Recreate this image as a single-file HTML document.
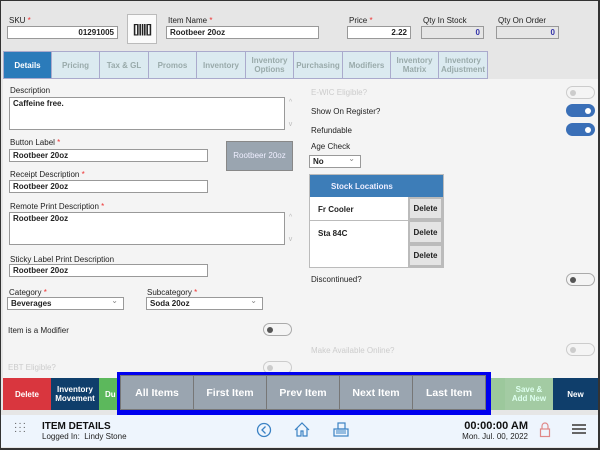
<!DOCTYPE html>
<html><head><style>
*{box-sizing:border-box;margin:0;padding:0}
body{width:600px;height:450px;overflow:hidden;background:#333;font-family:"Liberation Sans",sans-serif;font-size:8px;color:#222;position:relative}
.a{position:absolute}
.lbl{position:absolute;font-size:8px;color:#222}
.r{color:#e33}
.in{position:absolute;background:#fff;border:1px solid #999;font-size:8px;font-weight:bold;padding:1px 3px;height:13px;line-height:10px}
.tab{position:absolute;top:51px;height:28px;background:#dbeaf0;border:1px solid #aac;color:#9aa;font-weight:bold;font-size:8px;text-align:center;display:flex;align-items:center;justify-content:center;line-height:9px}
.tg{position:absolute;width:29px;height:13px;border-radius:7px;border:1px solid #aaa;background:#f4f4f4}
.tg::after{content:"";position:absolute;left:3px;top:3px;width:6px;height:6px;border-radius:50%;background:#555}
.tg.d{border-color:#ccc}.tg.d::after{background:#ccc}
.tg.on{background:#3a6fb7;border-color:#3a6fb7}.tg.on::after{left:auto;right:3px;background:#fff}
.btn{position:absolute;top:378px;height:32px;color:#fff;font-weight:bold;font-size:8px;display:flex;align-items:center;justify-content:center;text-align:center;line-height:9px}
.nb{position:absolute;top:3px;height:35px;background:#9aa5b0;border:1px solid #777;color:#fff;font-size:10.5px;font-weight:bold;display:flex;align-items:center;justify-content:center}
.sel::after{content:"⌄";position:absolute;right:5px;top:-2px;color:#888;font-weight:normal}
.cell{position:absolute;background:#fff;font-weight:bold;font-size:8px}
.del{position:absolute;background:#e4e4e4;border:1px solid #bbb;font-weight:bold;font-size:8px;display:flex;align-items:center;justify-content:center}
.sb{position:absolute;width:9px;color:#bbb;font-size:7px;text-align:center}
</style></head><body>
<div class="a" style="left:1px;top:1px;width:597px;height:447px;background:#e6e6e6"></div>
<div class="lbl" style="left:9px;top:16px">SKU <span class="r">*</span></div>
<div class="in" style="left:7px;top:26px;width:111px;text-align:right">01291005</div>
<div class="a" style="left:127px;top:14px;width:30px;height:30px;background:#fafafa;border:1px solid #bbb;font-size:12px;font-weight:bold;text-align:center;line-height:28px;letter-spacing:-1px">[|||||]</div>
<div class="lbl" style="left:168px;top:16px">Item Name <span class="r">*</span></div>
<div class="in" style="left:166px;top:26px;width:153px">Rootbeer 20oz</div>
<div class="lbl" style="left:349px;top:16px">Price <span class="r">*</span></div>
<div class="in" style="left:347px;top:26px;width:64px;text-align:right">2.22</div>
<div class="lbl" style="left:423px;top:16px">Qty In Stock</div>
<div class="in" style="left:421px;top:26px;width:63px;text-align:right;background:#e6e6e6;color:#33a">0</div>
<div class="lbl" style="left:498px;top:16px">Qty On Order</div>
<div class="in" style="left:496px;top:26px;width:63px;text-align:right;background:#e6e6e6;color:#33a">0</div>

<div class="tab" style="left:3px;width:49px;background:#2b7bba;color:#fff">Details</div>
<div class="tab" style="left:51px;width:49px">Pricing</div>
<div class="tab" style="left:99px;width:50px">Tax &amp; GL</div>
<div class="tab" style="left:148px;width:49px">Promos</div>
<div class="tab" style="left:196px;width:50px">Inventory</div>
<div class="tab" style="left:245px;width:49px">Inventory<br>Options</div>
<div class="tab" style="left:293px;width:50px">Purchasing</div>
<div class="tab" style="left:342px;width:49px">Modifiers</div>
<div class="tab" style="left:390px;width:49px">Inventory<br>Matrix</div>
<div class="tab" style="left:438px;width:50px">Inventory<br>Adjustment</div>

<div class="a" style="left:3px;top:79px;width:595px;height:299px;background:#f4f4f4"></div>
<div class="lbl" style="left:10px;top:86px">Description</div>
<div class="in" style="left:9px;top:97px;width:276px;height:33px">Caffeine free.</div>
<div class="sb" style="left:286px;top:99px">^</div><div class="sb" style="left:286px;top:121px">v</div>
<div class="lbl" style="left:10px;top:138px">Button Label <span class="r">*</span></div>
<div class="in" style="left:9px;top:149px;width:199px">Rootbeer 20oz</div>
<div class="a" style="left:226px;top:141px;width:67px;height:30px;background:#9aa5b0;border:1px solid #888;color:#eef;font-size:8px;text-align:center;line-height:28px">Rootbeer 20oz</div>
<div class="lbl" style="left:10px;top:170px">Receipt Description <span class="r">*</span></div>
<div class="in" style="left:9px;top:180px;width:199px">Rootbeer 20oz</div>
<div class="lbl" style="left:10px;top:202px">Remote Print Description <span class="r">*</span></div>
<div class="in" style="left:9px;top:212px;width:276px;height:33px">Rootbeer 20oz</div>
<div class="sb" style="left:286px;top:214px">^</div><div class="sb" style="left:286px;top:236px">v</div>
<div class="lbl" style="left:10px;top:255px">Sticky Label Print Description</div>
<div class="in" style="left:9px;top:264px;width:199px">Rootbeer 20oz</div>
<div class="lbl" style="left:9px;top:288px">Category <span class="r">*</span></div>
<div class="in sel" style="left:7px;top:297px;width:117px">Beverages</div>
<div class="lbl" style="left:147px;top:288px">Subcategory <span class="r">*</span></div>
<div class="in sel" style="left:146px;top:297px;width:117px">Soda 20oz</div>
<div class="lbl" style="left:8px;top:326px">Item is a Modifier</div>
<div class="tg" style="left:263px;top:323px"></div>
<div class="lbl" style="left:8px;top:363px;color:#ccc">EBT Eligible?</div>
<div class="tg d" style="left:263px;top:361px"></div>

<div class="lbl" style="left:311px;top:88px;color:#ccc">E-WIC Eligible?</div>
<div class="tg d" style="left:566px;top:86px"></div>
<div class="lbl" style="left:311px;top:107px">Show On Register?</div>
<div class="tg on" style="left:566px;top:104px"></div>
<div class="lbl" style="left:311px;top:126px">Refundable</div>
<div class="tg on" style="left:566px;top:123px"></div>
<div class="lbl" style="left:311px;top:142px">Age Check</div>
<div class="in sel" style="left:309px;top:155px;width:52px">No</div>
<div class="a" style="left:309px;top:174px;width:135px;height:94px;background:#bbb"></div>
<div class="a" style="left:310px;top:175px;width:133px;height:22px;background:#3d7db8;color:#eef;font-weight:bold;font-size:8px;padding:7px 0 0 21px">Stock Locations</div>
<div class="cell" style="left:310px;top:197px;width:98px;height:23px;padding:8px 0 0 8px">Fr Cooler</div>
<div class="del" style="left:409px;top:198px;width:33px;height:21px">Delete</div>
<div class="cell" style="left:310px;top:221px;width:98px;height:23px;padding:8px 0 0 8px">Sta 84C</div>
<div class="del" style="left:409px;top:221px;width:33px;height:22px">Delete</div>
<div class="cell" style="left:310px;top:244px;width:98px;height:23px"></div>
<div class="del" style="left:409px;top:245px;width:33px;height:21px">Delete</div>
<div class="lbl" style="left:311px;top:275px">Discontinued?</div>
<div class="tg" style="left:566px;top:273px"></div>
<div class="lbl" style="left:311px;top:346px;color:#ccc">Make Available Online?</div>
<div class="tg d" style="left:566px;top:343px"></div>

<div class="btn" style="left:3px;width:48px;background:#d9363e">Delete</div>
<div class="btn" style="left:51px;width:48px;background:#0f3e6b">Inventory<br>Movement</div>
<div class="btn" style="left:99px;width:20px;background:#5cb85c;justify-content:flex-start;padding-left:6px">Du</div>
<div class="btn" style="left:488px;width:17px;background:#9cc89c"></div>
<div class="btn" style="left:505px;width:48px;background:#a3cba3;color:#dfe">Save &amp;<br>Add New</div>
<div class="btn" style="left:553px;width:45px;background:#0f3e6b">New</div>

<div class="a" style="left:117px;top:372px;width:374px;height:43px;background:#0000ee;">
<div class="nb" style="left:3px;width:74px">All Items</div>
<div class="nb" style="left:76px;width:74px">First Item</div>
<div class="nb" style="left:149px;width:74px">Prev Item</div>
<div class="nb" style="left:222px;width:74px">Next Item</div>
<div class="nb" style="left:295px;width:74px">Last Item</div>
</div>

<div class="a" style="left:1px;top:415px;width:597px;height:32px;background:#eef5fd"></div>
<div class="a" style="left:14px;top:422px;font-size:10px;color:#555;line-height:4px;letter-spacing:1px">···<br>···<br>···</div>
<div class="a" style="left:42px;top:421px;font-size:10px;font-weight:bold;color:#111">ITEM DETAILS</div>
<div class="a" style="left:42px;top:432px;font-size:8px;color:#222">Logged In:&nbsp; Lindy Stone</div>
<svg class="a" style="left:256px;top:422px" width="16" height="16"><circle cx="8" cy="8" r="6.5" fill="none" stroke="#3b82c4" stroke-width="1.3"/><path d="M9.5 4.5 6 8l3.5 3.5" fill="none" stroke="#3b82c4" stroke-width="1.3"/></svg>
<svg class="a" style="left:293px;top:421px" width="18" height="17"><path d="M2 9 9 2l7 7M4 7v8h4v-5h2v5h4V7" fill="none" stroke="#3b82c4" stroke-width="1.2"/></svg>
<svg class="a" style="left:332px;top:421px" width="18" height="17"><rect x="2" y="8" width="14" height="7" fill="none" stroke="#3b82c4" stroke-width="1.2"/><rect x="6" y="2" width="7" height="6" fill="none" stroke="#3b82c4" stroke-width="1.2"/><path d="M4 10h10M4 12h10" stroke="#3b82c4"/></svg>
<div class="a" style="left:460px;top:420px;width:68px;text-align:right;font-size:11px;font-weight:bold;color:#111">00:00:00 AM</div>
<div class="a" style="left:440px;top:432px;width:88px;text-align:right;font-size:8px;color:#222">Mon. Jul. 00, 2022</div>
<svg class="a" style="left:539px;top:421px" width="12" height="17"><path d="M3 8V5a3 3 0 0 1 6 0v3" fill="none" stroke="#e08888" stroke-width="1.2"/><rect x="1.5" y="8" width="9" height="7.5" fill="none" stroke="#e08888" stroke-width="1.2"/></svg>
<div class="a" style="left:572px;top:424px;width:14px;height:10px;border-top:2px solid #666;border-bottom:2px solid #666"><div style="margin-top:2px;height:2px;background:#666"></div></div>
</body></html>
